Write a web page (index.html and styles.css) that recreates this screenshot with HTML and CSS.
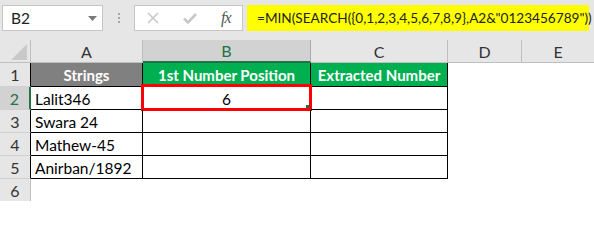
FILE: index.html
```html
<!DOCTYPE html>
<html lang="en">
<head>
<meta charset="utf-8">
<title>Excel sheet</title>
<link rel="stylesheet" href="styles.css">
</head>
<body>
<div class="app">
  <div class="fbar">
    <div class="namebox">
      <span class="ref">B2</span>
      <svg class="caret" width="9" height="5" viewBox="0 0 9 5"><path d="M0 0H9L4.5 5Z" fill="#7a7a7a"/></svg>
    </div>
    <div class="grip">
      <svg width="3" height="11" viewBox="0 0 3 11"><rect x="0" y="0" width="2" height="2" fill="#a6a6a6"/><rect x="0" y="4" width="2" height="2" fill="#a6a6a6"/><rect x="0" y="8" width="2" height="2" fill="#a6a6a6"/></svg>
    </div>
    <div class="fxbox">
      <svg class="ico-x" width="12" height="12" viewBox="0 0 12 12"><path d="M1 1L11 11M11 1L1 11" stroke="#c8c8c8" stroke-width="1.6" fill="none"/></svg>
      <svg class="ico-check" width="14" height="11" viewBox="0 0 14 11"><path d="M1 5.5L5 9.5L13 1" stroke="#c8c8c8" stroke-width="2.6" fill="none"/></svg>
      <span class="fx">fx</span>
    </div>
    <div class="formula">=MIN(SEARCH({0,1,2,3,4,5,6,7,8,9},A2&amp;"0123456789"))</div>
  </div>

  <div class="sheet">
    <div class="corner"><svg width="16" height="16" viewBox="0 0 16 16"><path d="M16 0V16H0Z" fill="#c9c9c9"/></svg></div>
    <div class="colh">A</div>
    <div class="colh sel">B</div>
    <div class="colh">C</div>
    <div class="colh">D</div>
    <div class="colh last">E</div>

    <div class="rowh r1">1</div>
    <div class="cell t hdr gray">Strings</div>
    <div class="cell t hdr green">1st Number Position</div>
    <div class="cell t hdr green">Extracted Number</div>
    <div class="cell"></div>
    <div class="cell"></div>

    <div class="rowh sel">2</div>
    <div class="cell t txt">Lalit346</div>
    <div class="cell t num active">6<span class="selbox"><span class="handle"></span></span></div>
    <div class="cell t"></div>
    <div class="cell"></div>
    <div class="cell"></div>

    <div class="rowh">3</div>
    <div class="cell t txt">Swara 24</div>
    <div class="cell t"></div>
    <div class="cell t"></div>
    <div class="cell"></div>
    <div class="cell"></div>

    <div class="rowh">4</div>
    <div class="cell t txt">Mathew-45</div>
    <div class="cell t"></div>
    <div class="cell t"></div>
    <div class="cell"></div>
    <div class="cell"></div>

    <div class="rowh">5</div>
    <div class="cell t txt">Anirban/1892</div>
    <div class="cell t"></div>
    <div class="cell t"></div>
    <div class="cell"></div>
    <div class="cell"></div>

    <div class="rowh r6">6</div>
    <div class="cell"></div>
    <div class="cell"></div>
    <div class="cell"></div>
    <div class="cell"></div>
    <div class="cell"></div>
  </div>
</div>
</body>
</html>
```

FILE: styles.css
```css
* { box-sizing: border-box; }
html, body { margin: 0; padding: 0; background: #ffffff; }
body { width: 594px; height: 201px; overflow: hidden; font-family: Lato, "Open Sans", sans-serif; }

.app { width: 594px; height: 201px; display: flex; flex-direction: column; }

/* formula bar */
.fbar {
  height: 40px;
  flex: none;
  background: #e6e6e6;
  display: flex;
  align-items: flex-start;
  padding-top: 5px;
  padding-left: 2px;
}
.namebox {
  width: 101px;
  height: 26px;
  background: #ffffff;
  border: 1px solid #c6c6c6;
  display: flex;
  align-items: center;
  justify-content: space-between;
  padding: 0 5px 0 8px;
}
.ref { font-size: 15.5px; color: #222; }
.grip {
  width: 31px;
  height: 26px;
  display: flex;
  align-items: center;
  justify-content: center;
  padding-left: 1px;
}
.fxbox {
  width: 109px;
  height: 26px;
  background: #ffffff;
  border: 1px solid #c6c6c6;
  display: flex;
  align-items: center;
  padding-left: 12px;
}
.ico-x { margin-right: 24px; }
.ico-check { margin-right: 24px; margin-top: 1px; }
.fx {
  font-family: "Liberation Serif", "DejaVu Serif", serif;
  font-style: italic;
  font-size: 16px;
  color: #555555;
  letter-spacing: -1px;
}
.formula {
  margin-left: 4px;
  width: 342px;
  height: 26px;
  background: #ffff00;
  padding-left: 10px;
  display: flex;
  align-items: center;
  font-size: 13.6px;
  color: #222;
  white-space: nowrap;
}

/* sheet */
.sheet {
  flex: 1;
  display: grid;
  grid-template-columns: 31px 112px 168px 137px 74px 72px;
  grid-template-rows: 23px 24px 23px 23px 23px 23px 23px;
  background: #ffffff;
}
.corner {
  background: #e6e6e6;
  border-right: 1px solid #bfbfbf;
  border-bottom: 1px solid #bfbfbf;
  display: flex;
  align-items: flex-end;
  justify-content: flex-end;
  padding: 0 3px 2px 0;
}
.colh {
  background: #e6e6e6;
  border-right: 1px solid #bfbfbf;
  border-bottom: 1px solid #bfbfbf;
  display: flex;
  align-items: center;
  justify-content: center;
  font-size: 16px;
  color: #333333;
}
.colh.last { border-right: none; }
.colh.sel {
  background: #d2d2d2;
  color: #217346;
  border-bottom: 2px solid #217346;
  border-right-color: #ababab;
}
.rowh {
  background: #e6e6e6;
  border-right: 1px solid #000000;
  border-bottom: 1px solid #d0d0d0;
  display: flex;
  align-items: center;
  justify-content: center;
  font-size: 16px;
  color: #333333;
}
.rowh.sel {
  background: #d2d2d2;
  color: #217346;
  border-right: 2px solid #217346;
}
.rowh.r6 { border-right-color: #bfbfbf; }

.cell { position: relative; display: flex; align-items: center; font-size: 15.5px; color: #000; }
.cell.t { border-right: 1px solid #000000; border-bottom: 1px solid #000000; }
.hdr { justify-content: center; font-weight: 700; font-size: 15px; color: #ffffff; }
.gray { background: #808080; }
.green { background: #00b050; }
.txt { padding-left: 4px; padding-top: 1px; }
.num { justify-content: center; padding-top: 1px; }

.selbox {
  position: absolute;
  left: -2px;
  top: -3px;
  right: -2px;
  bottom: -2px;
  border: 3px solid #ff0000;
}
.handle {
  position: absolute;
  right: 0;
  bottom: 0;
  width: 3px;
  height: 3px;
  background: #217346;
}
```
